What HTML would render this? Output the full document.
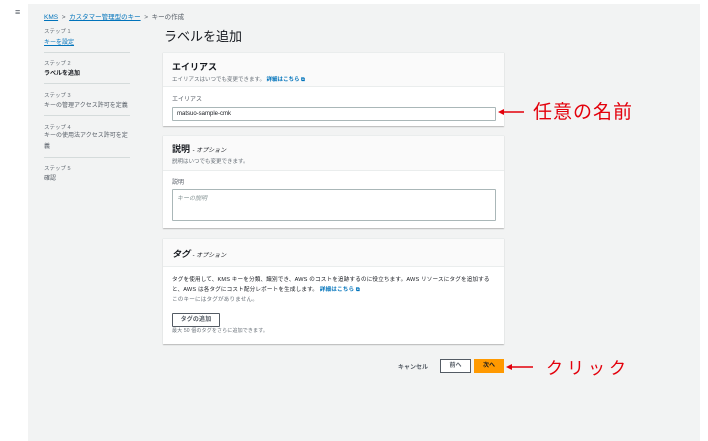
<!DOCTYPE html>
<html><head><meta charset="utf-8"><style>
*{margin:0;padding:0;box-sizing:border-box}
body{width:708px;height:441px;background:#fff;font-family:"Liberation Sans","Noto Sans CJK JP",sans-serif;position:relative;overflow:hidden;color:#16191f}
.a{position:absolute}
.gray{left:28px;top:4px;width:672px;height:437px;background:#f2f3f3}
.s{font-size:5.5px;color:#687078}
.t{font-size:6px;color:#545b64}
.hr{height:1px;background:#d5dbdb;width:86px;left:44px}
.card{background:#fff;left:163px;width:341px;box-shadow:0 1px 1px rgba(0,0,0,.25);border-top:1px solid #eaeded}
.hd{background:#fafafa;border-bottom:1px solid #eaeded}
.link{color:#0073bb}
.inp{border:1px solid #aab7b8;background:#fff;border-radius:1px}
.red{color:#e3000b}
</style></head><body>
<div class="a" style="left:15px;top:7px;font-size:9px;color:#545b64">≡</div>
<div class="a gray"></div>
<div class="a" style="left:44px;top:11px;font-size:6.5px;color:#545b64;white-space:nowrap"><span class="link" style="text-decoration:underline">KMS</span> &nbsp;&gt;&nbsp; <span class="link" style="text-decoration:underline">カスタマー管理型のキー</span> &nbsp;&gt;&nbsp; キーの作成</div>
<div class="a s" style="left:44px;top:27px">ステップ 1</div>
<div class="a t link" style="left:44px;top:37px;text-decoration:underline">キーを設定</div>
<div class="a hr" style="top:52px"></div>
<div class="a s" style="left:44px;top:59px">ステップ 2</div>
<div class="a t" style="left:44px;top:68px;color:#16191f;font-weight:bold">ラベルを追加</div>
<div class="a hr" style="top:83px"></div>
<div class="a s" style="left:44px;top:91px">ステップ 3</div>
<div class="a t" style="left:44px;top:100px">キーの管理アクセス許可を定義</div>
<div class="a hr" style="top:115px"></div>
<div class="a s" style="left:44px;top:123px">ステップ 4</div>
<div class="a t" style="left:44px;top:131px;width:86px;line-height:11px">キーの使用法アクセス許可を定義</div>
<div class="a hr" style="top:157px"></div>
<div class="a s" style="left:44px;top:164px">ステップ 5</div>
<div class="a t" style="left:44px;top:173px">確認</div>

<div class="a" style="left:164px;top:26px;font-size:13px;color:#16191f">ラベルを追加</div>

<div class="a card" style="top:52px;height:74px">
 <div class="hd" style="height:34px;padding:7px 9px">
  <div style="font-size:9px;font-weight:bold">エイリアス</div>
  <div style="font-size:5.5px;color:#687078;margin-top:2px">エイリアスはいつでも変更できます。 <span class="link" style="font-weight:bold">詳細はこちら ⧉</span></div>
 </div>
 <div style="padding:7px 9px 0">
  <div style="font-size:6px;color:#545b64">エイリアス</div>
  <div class="inp" style="margin-top:4px;height:14px;width:324px;font-size:6px;padding:3px 4px">matsuo-sample-cmk</div>
 </div>
</div>

<div class="a card" style="top:135px;height:93px">
 <div class="hd" style="height:35px;padding:6px 9px">
  <div style="font-size:9px;font-weight:bold">説明 <span style="font-size:6px;font-weight:normal;font-style:italic">- オプション</span></div>
  <div style="font-size:5.5px;color:#687078;margin-top:2px">説明はいつでも変更できます。</div>
 </div>
 <div style="padding:6px 9px 0">
  <div style="font-size:6px;color:#545b64">説明</div>
  <div class="inp" style="margin-top:3px;height:32px;width:324px;font-size:6px;padding:3px 4px;color:#879596;font-style:italic">キーの説明</div>
 </div>
</div>

<div class="a card" style="top:238px;height:106px">
 <div class="hd" style="height:28px;padding:8px 9px">
  <div style="font-size:9px;font-weight:bold;font-style:italic">タグ <span style="font-size:6px;font-weight:normal">- オプション</span></div>
 </div>
 <div style="padding:8px 9px 0;font-size:5.6px;color:#16191f;line-height:10px;letter-spacing:0.15px">
  <div>タグを使用して、KMS キーを分類、識別でき、AWS のコストを追跡するのに役立ちます。AWS リソースにタグを追加すると、AWS は各タグにコスト配分レポートを生成します。 <span class="link" style="font-weight:bold">詳細はこちら ⧉</span></div>
  <div style="color:#687078">このキーにはタグがありません。</div>
  <div style="margin-top:8px;width:48px;height:14px;border:1px solid #545b64;border-radius:1px;font-size:6px;font-weight:bold;text-align:center;line-height:12px;color:#545b64">タグの追加</div>
  <div style="font-size:5px;color:#687078;line-height:8px">最大 50 個のタグをさらに追加できます。</div>
 </div>
</div>

<div class="a" style="left:398px;top:362px;font-size:6px;font-weight:bold;color:#545b64">キャンセル</div>
<div class="a" style="left:440px;top:359px;width:31px;height:14px;border:1px solid #545b64;background:#fff;font-size:6px;font-weight:bold;text-align:center;line-height:12px;color:#545b64">前へ</div>
<div class="a" style="left:474px;top:359px;width:30px;height:14px;background:#ff9900;font-size:6px;font-weight:bold;text-align:center;line-height:14px;color:#16191f">次へ</div>

<svg class="a" style="left:498px;top:107px" width="28" height="10"><line x1="5" y1="5" x2="26" y2="5" stroke="#e3000b" stroke-width="1.5"/><polygon points="0,5 6,2 6,8" fill="#e3000b"/></svg>
<div class="a red" style="left:533px;top:97px;font-size:19px;letter-spacing:1px">任意の名前</div>
<svg class="a" style="left:506px;top:362px" width="28" height="10"><line x1="5" y1="5" x2="27" y2="5" stroke="#e3000b" stroke-width="1.5"/><polygon points="0,5 6,2 6,8" fill="#e3000b"/></svg>
<div class="a red" style="left:546px;top:354px;font-size:17px;letter-spacing:4px">クリック</div>
</body></html>
